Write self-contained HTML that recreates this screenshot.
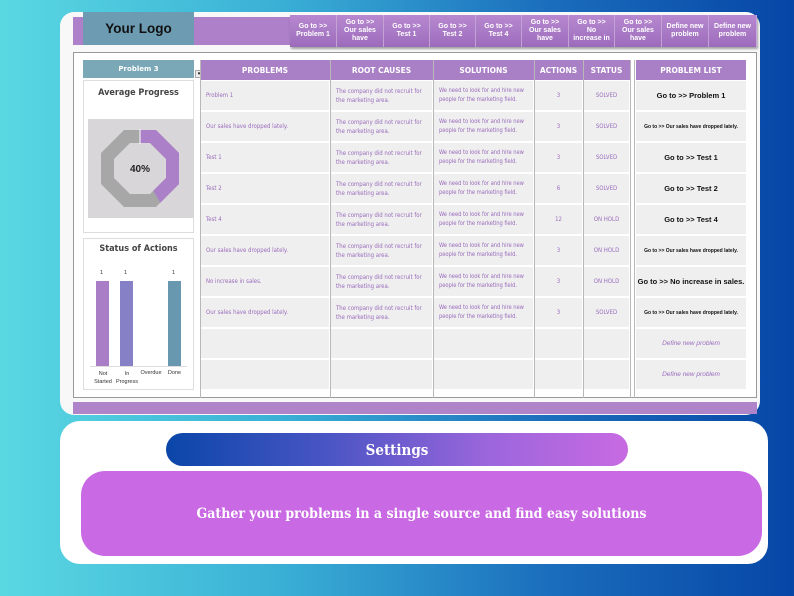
<!DOCTYPE html>
<html><head><meta charset="utf-8"><style>
*{margin:0;padding:0;box-sizing:border-box}
body{width:794px;height:596px;overflow:hidden;position:relative;font-family:"Liberation Sans",sans-serif;background:linear-gradient(90deg,#5ad8e2 0%,#3ab0d6 35%,#1a6cbc 70%,#0646a6 100%)}
.a{position:absolute}
.card{background:#f8f8f8;border-radius:14px}
.nav{position:absolute;top:15px;height:32px;background:linear-gradient(#b889d0,#9c6cbc);color:#fff;font-size:7px;font-weight:bold;text-align:center;display:flex;align-items:center;justify-content:center;line-height:8px;border-right:1px solid #c9a8dd;box-shadow:1px 2px 2px rgba(0,0,0,.35)}
.th{position:absolute;top:60px;height:20px;background:#a97fc6;color:#fff;font-size:7.5px;font-weight:bold;display:flex;align-items:center;justify-content:center;font-family:"DejaVu Sans",sans-serif}
.c{position:absolute;background:#efefef;font-family:"DejaVu Sans Condensed","DejaVu Sans",sans-serif;font-size:6px;color:#9a6cbc;line-height:9px;display:flex;align-items:center;padding:0 5px}
.ctr{justify-content:center}
.pl{position:absolute;left:636px;width:110px;background:#efefef;display:flex;align-items:center;justify-content:center;font-weight:bold;color:#111;text-align:center}
.vl{position:absolute;top:60px;height:338px;width:1px;background:#b8b8b8}
</style></head><body>
<div class="a card" style="left:60px;top:12px;width:700px;height:403px"></div>
<div class="a card" style="left:60px;top:421px;width:708px;height:143px;background:#fff;border-radius:20px"></div>

<div class="a" style="left:73px;top:17px;width:684px;height:28px;background:#ad80c9"></div>
<div class="a" style="left:83px;top:12px;width:111px;height:33px;background:#6c9bb2;color:#111;font-weight:bold;font-size:13.5px;display:flex;align-items:center;justify-content:center;font-family:'Liberation Sans',sans-serif">Your Logo</div>

<div class="nav" style="left:290px;width:47px">Go to &gt;&gt;<br>Problem 1</div>
<div class="nav" style="left:337px;width:47px">Go to &gt;&gt;<br>Our sales<br>have</div>
<div class="nav" style="left:384px;width:46px">Go to &gt;&gt;<br>Test 1</div>
<div class="nav" style="left:430px;width:46px">Go to &gt;&gt;<br>Test 2</div>
<div class="nav" style="left:476px;width:46px">Go to &gt;&gt;<br>Test 4</div>
<div class="nav" style="left:522px;width:47px">Go to &gt;&gt;<br>Our sales<br>have</div>
<div class="nav" style="left:569px;width:46px">Go to &gt;&gt;<br>No<br>increase in</div>
<div class="nav" style="left:615px;width:47px">Go to &gt;&gt;<br>Our sales<br>have</div>
<div class="nav" style="left:662px;width:47px">Define new<br>problem</div>
<div class="nav" style="left:709px;width:48px">Define new<br>problem</div>

<div class="a" style="left:73px;top:52px;width:684px;height:346px;background:#fff;border:1px solid #999"></div>

<div class="a" style="left:83px;top:60px;width:111px;height:18px;background:#7aa8b6;color:#fff;font-size:7px;font-weight:bold;display:flex;align-items:center;justify-content:center;font-family:'DejaVu Sans',sans-serif">Problem 3</div>
<div class="a" style="left:195px;top:70px;width:8px;height:8px;background:#eee;border:1px solid #aaa;font-size:5px;line-height:6px;text-align:center">▾</div>
<div class="a" style="left:83px;top:80px;width:111px;height:153px;background:#fff;border:1px solid #ddd"></div>
<div class="a" style="left:83px;top:88px;width:111px;text-align:center;font-size:9px;font-weight:bold;color:#444;font-family:'DejaVu Sans Condensed','DejaVu Sans',sans-serif">Average Progress</div>
<div class="a" style="left:88px;top:119px;width:106px;height:99px;background:#d9d6da"></div>
<svg class="a" style="left:88px;top:119px" width="106" height="99" viewBox="0 0 106 99">
<defs><clipPath id="w"><polygon points="52,0 52,49 120,49 120,0"/></clipPath><clipPath id="w2"><polygon points="52,49 120,49 120,90 82,100"/></clipPath></defs>
<path fill-rule="evenodd" fill="#a7a7a7" d="M36,11 L68,11 L91,34 L91,65 L68,88 L36,88 L13,65 L13,34 Z M42,24 L62,24 L78,40 L78,59 L62,75 L42,75 L26,59 L26,40 Z"/>
<g fill="#ab80c8" fill-rule="evenodd">
<path clip-path="url(#w)" d="M36,11 L68,11 L91,34 L91,65 L68,88 L36,88 L13,65 L13,34 Z M42,24 L62,24 L78,40 L78,59 L62,75 L42,75 L26,59 L26,40 Z"/>
<path clip-path="url(#w2)" d="M36,11 L68,11 L91,34 L91,65 L68,88 L36,88 L13,65 L13,34 Z M42,24 L62,24 L78,40 L78,59 L62,75 L42,75 L26,59 L26,40 Z"/>
</g>
<line x1="52" y1="10" x2="52" y2="25" stroke="#fff" stroke-width="1"/>
<text x="52" y="53" font-family="Liberation Sans" font-weight="bold" font-size="10" text-anchor="middle" fill="#222">40%</text>
</svg>

<div class="a" style="left:83px;top:238px;width:111px;height:152px;background:#fff;border:1px solid #ddd"></div>
<div class="a" style="left:83px;top:244px;width:111px;text-align:center;font-size:9px;font-weight:bold;color:#444;font-family:'DejaVu Sans Condensed','DejaVu Sans',sans-serif">Status of Actions</div>
<div class="a" style="left:96px;top:281px;width:13px;height:85px;background:#aa7ec6"></div>
<div class="a" style="left:120px;top:281px;width:13px;height:85px;background:#8680c6"></div>
<div class="a" style="left:168px;top:281px;width:13px;height:85px;background:#6898b0"></div>
<div class="a" style="left:90px;top:366px;width:97px;height:1px;background:#ddd"></div>
<div class="a" style="font-size:5.5px;color:#333;left:100px;top:270px">1</div>
<div class="a" style="font-size:5.5px;color:#333;left:124px;top:270px">1</div>
<div class="a" style="font-size:5.5px;color:#333;left:172px;top:270px">1</div>
<div class="a" style="font-size:5.5px;color:#333;left:92px;top:370px;width:22px;text-align:center;line-height:8px">Not Started</div>
<div class="a" style="font-size:5.5px;color:#333;left:115px;top:370px;width:24px;text-align:center;line-height:8px">In Progress</div>
<div class="a" style="font-size:5.5px;color:#333;left:139px;top:370px;width:24px;text-align:center">Overdue</div>
<div class="a" style="font-size:5.5px;color:#333;left:165px;top:370px;width:19px;text-align:center">Done</div>

<div class="th" style="left:200px;width:130px">PROBLEMS</div>
<div class="th" style="left:330px;width:103px">ROOT CAUSES</div>
<div class="th" style="left:433px;width:101px">SOLUTIONS</div>
<div class="th" style="left:534px;width:49px">ACTIONS</div>
<div class="th" style="left:583px;width:47px">STATUS</div>
<div class="th" style="left:636px;width:110px">PROBLEM LIST</div>

<div id="rows"></div>
<script>
var P=["Problem 1","Our sales have dropped lately.","Test 1","Test 2","Test 4","Our sales have dropped lately.","No increase in sales.","Our sales have dropped lately.","",""];
var A=["3","3","3","6","12","3","3","3","",""];
var S=["SOLVED","SOLVED","SOLVED","SOLVED","ON HOLD","ON HOLD","ON HOLD","SOLVED","",""];
var L=[["Go to >> Problem 1",7.5],["Go to >> Our sales have dropped lately.",5],["Go to >> Test 1",7.5],["Go to >> Test 2",7.5],["Go to >> Test 4",7.5],["Go to >> Our sales have dropped lately.",5],["Go to >> No increase in sales.",7.5],["Go to >> Our sales have dropped lately.",5],["Define new problem",6.5,1],["Define new problem",6.5,1]];
var h="";
function esc(s){return s.replace(/>/g,"&gt;")}
for(var i=0;i<10;i++){var y=81+i*31;var rc=i<8?"The company did not recruit for the marketing area.":"";var so=i<8?"We need to look for and hire new people for the marketing field.":"";
h+='<div class="c" style="left:201px;top:'+y+'px;width:128px;height:29px">'+P[i]+'</div>';
h+='<div class="c" style="left:331px;top:'+y+'px;width:101px;height:29px">'+rc+'</div>';
h+='<div class="c" style="left:434px;top:'+y+'px;width:99px;height:29px;padding:0 2px 0 5px;font-size:5.8px;letter-spacing:-0.05px">'+so+'</div>';
h+='<div class="c ctr" style="left:535px;top:'+y+'px;width:47px;height:29px">'+A[i]+'</div>';
h+='<div class="c ctr" style="left:584px;top:'+y+'px;width:45px;height:29px">'+S[i]+'</div>';
var st=L[i][2]?'font-weight:normal;font-style:italic;color:#9a6cbc;':'';
h+='<div class="pl" style="top:'+y+'px;height:29px;font-size:'+L[i][1]+'px;'+st+'">'+esc(L[i][0])+'</div>';}
document.getElementById("rows").innerHTML=h;
</script>
<div class="vl" style="left:200px"></div><div class="vl" style="left:330px"></div><div class="vl" style="left:433px"></div><div class="vl" style="left:534px"></div><div class="vl" style="left:583px"></div><div class="vl" style="left:630px"></div><div class="vl" style="left:634px"></div>

<div class="a" style="left:73px;top:402px;width:684px;height:12px;background:#af84c8"></div>

<div class="a" style="left:166px;top:433px;width:462px;height:33px;border-radius:17px;background:linear-gradient(90deg,#0a46a8,#4a55c4 35%,#9c66dc 70%,#c86ae2);color:#fff;font-family:'DejaVu Serif Condensed','DejaVu Serif',serif;font-weight:bold;font-size:15px;display:flex;align-items:center;justify-content:center">Settings</div>
<div class="a" style="left:81px;top:471px;width:681px;height:85px;border-radius:24px;background:#c96ae4;color:#fff;font-family:'DejaVu Serif Condensed','DejaVu Serif',serif;font-weight:bold;font-size:14px;display:flex;align-items:center;justify-content:center">Gather your problems in a single source and find easy solutions</div>
</body></html>
